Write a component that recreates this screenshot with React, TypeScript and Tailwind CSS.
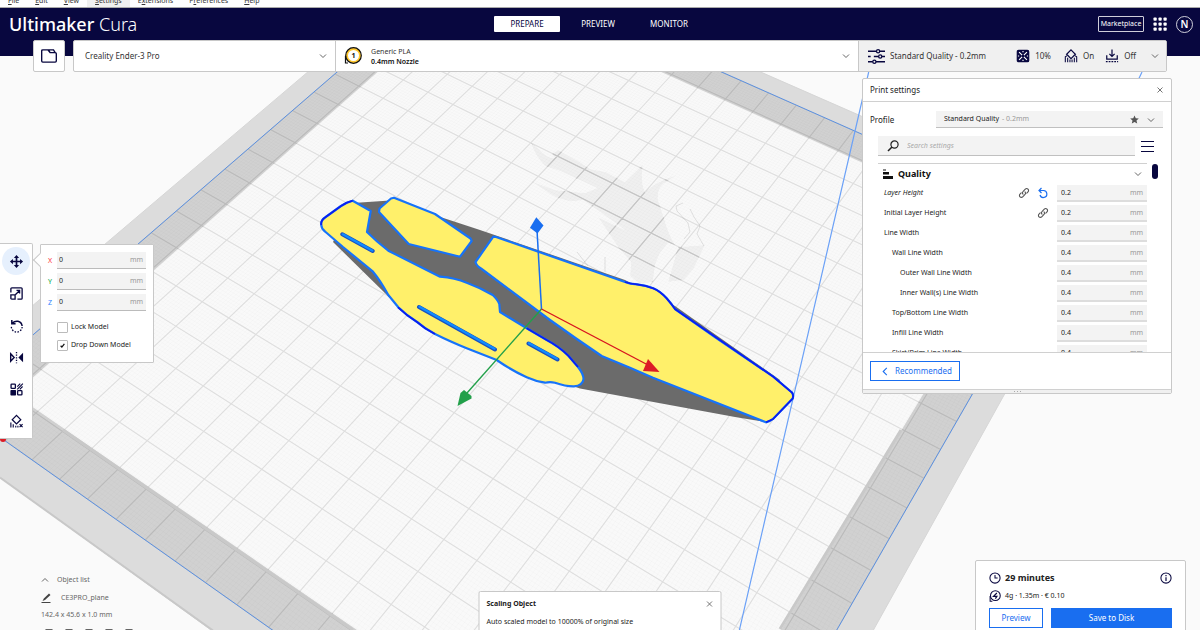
import type { ReactNode } from "react";

const NAVY = "#08073f";

const menuItems = [
  { key: "F", rest: "ile" },
  { key: "E", rest: "dit" },
  { key: "V", rest: "iew" },
  { key: "S", rest: "ettings", active: true },
  { key: "E", rest: "xtensions", second: true },
  { key: "P", rest: "references", second: true },
  { key: "H", rest: "elp" },
];

const settings = [
  { id: "layer-height", name: "Layer Height", value: "0.2", pad: "", link: true, reset: true },
  { id: "initial-layer", name: "Initial Layer Height", value: "0.2", pad: "", link: true },
  { id: "line-width", name: "Line Width", value: "0.4", pad: "" },
  { id: "wall-line", name: "Wall Line Width", value: "0.4", pad: "pl-2" },
  { id: "outer-wall", name: "Outer Wall Line Width", value: "0.4", pad: "pl-4" },
  { id: "inner-wall", name: "Inner Wall(s) Line Width", value: "0.4", pad: "pl-4" },
  { id: "top-bottom", name: "Top/Bottom Line Width", value: "0.4", pad: "pl-2" },
  { id: "infill-line", name: "Infill Line Width", value: "0.4", pad: "pl-2" },
  { id: "skirt-line", name: "Skirt/Brim Line Width", value: "0.4", pad: "pl-2" },
];

const axes = [
  { name: "X", color: "text-red-500" },
  { name: "Y", color: "text-green-600" },
  { name: "Z", color: "text-blue-500" },
];

// build plate coordinates (0..22 cm on both sides) to screen coordinates
const project = (cx: number, cy: number) => {
  const u = cx / 22;
  const v = cy / 22;
  const w = 1 - 0.2207 * u + 0.3429 * v;
  const x = (571.9 * u + 674.7 * v - 47) / w;
  const y = (308.3 * u - 458.7 * v + 404) / w;
  return `${x.toFixed(1)} ${y.toFixed(1)}`;
};

const quad = (u0: number, v0: number, u1: number, v1: number) =>
  `M${project(u0, v0)}L${project(u1, v0)}L${project(u1, v1)}L${project(u0, v1)}Z`;

const gridLines = (step: number) => {
  let d = "";
  for (let i = 0; i <= 22 / step; i++) {
    const p = i * step;
    d += `M${project(p, 0)}L${project(p, 22)}M${project(0, p)}L${project(22, p)}`;
  }
  return d;
};

const minorGrid = gridLines(0.1);
const majorGrid = gridLines(1);
const bed = quad(0, 0, 22, 22);
const inner = quad(1.08, 1.08, 20.92, 20.92);
const outer = quad(-0.78, -0.78, 22.71, 22.7);

const FUSELAGE =
  "M352.7 200.7Q347 202 341 206L325 217.500Q320.500 220.500 321.300 225Q321.500 229 325 231.500L343 247L373 271.700Q380 280 388.300 295L398.300 307.300Q406 315 416.700 321.700Q425 329 435 334Q449 341 466.700 348.300L496.700 360Q511 370 526.700 377.300Q536 381.500 545 382.700Q550 381.500 555 382.700Q566 386.500 574 386.300Q583 385.500 583.500 379Q583.500 374 578 367L568.300 355.700Q559 346.500 546.700 340L526.700 328.300L500 312L499.300 304Q498 300 492.700 295Q481 288 466.700 282.700Q455 278 440 276.700L388.300 250.700Q377 242 367 232L370.700 211Z";
const TAIL = "M394 197.700L391 198.500L379.500 208.500L379 212L408.700 244L460 256.700L471.700 241L470.500 238.500L435 214Z";
const WING =
  "M493.300 236.700L475.500 262Q476.500 266 481 268.500L550 320Q575 338 601.700 356L630 367.700L653 377.700L766 422.300Q770 421.500 773 419L792.700 398.500Q793.800 395 792 392.500L773.300 376.700L716.700 338.300L675 309Q672 304.500 666.700 298.300Q660 291 653.300 288.300Q646 285.300 637 284.300Q630 284 625 282L610 276.700L496 237Z";
const LOGO =
  "M531 143L538 148Q546 158 555 158L552 154L558 150L580 162L590 169L606 172L625 182L633 174L643 164Q640 180 645 193Q652 183 677 175L663 184Q657 190 658 200L664 218Q668 233 675 245L668 243L660 253L655 265L653 282L640 284L630 276L631 262L618 247L608 232L598 217L625 230L600 212L583 200Q566 204 550 194L531 181L555 190L585 193L597 188L575 178L560 171L545 166Q535 156 531 143ZM678 247L705 245L694 268L684 280L668 282Z";

const Chevron = ({ className = "size-2", up = false }: { className?: string; up?: boolean }) => (
  <svg viewBox="0 0 8 8" className={`${className} shrink-0`} fill="none" stroke="#555" strokeWidth="0.9" aria-hidden="true">
    <path d={up ? "M1 5.500L4 2.500L7 5.500" : "M1 2.500L4 5.500L7 2.500"} />
  </svg>
);

const CloseIcon = () => (
  <svg viewBox="0 0 8 8" className="size-2" fill="none" stroke="#666" strokeWidth="0.9" aria-hidden="true">
    <path d="M1.500 1.500L6.500 6.500M6.500 1.500L1.500 6.500" />
  </svg>
);

const Icon = ({ children, className = "size-4" }: { children: ReactNode; className?: string }) => (
  <svg viewBox="0 0 16 16" className={`${className} shrink-0`} fill="none" stroke={NAVY} strokeWidth="1.4" aria-hidden="true">
    {children}
  </svg>
);

const LinkIcon = () => (
  <svg viewBox="0 0 12 12" className="size-3" fill="none" stroke="#555" strokeWidth="1.1" strokeLinecap="round" aria-hidden="true">
    <path d="M5 7.200a2 2 0 0 1 .2-2.900L7.300 2.200a1.900 1.900 0 0 1 2.700 2.700L8.800 6.100" />
    <path d="M7 4.800a2 2 0 0 1-.2 2.900L4.700 9.800A1.900 1.900 0 0 1 2 7.100L3.200 5.900" />
  </svg>
);

const ResetIcon = () => (
  <svg viewBox="0 0 12 12" className="size-3" fill="none" stroke="#196ef0" strokeWidth="1.2" aria-hidden="true">
    <path d="M4.500 1L2 3.500L4.500 6M2 3.500H6.500A3.500 3.500 0 1 1 3 8" />
  </svg>
);

const tools = [
  {
    name: "Move",
    active: true,
    icon: (
      <>
        <path d="M8 3V13M3 8H13" strokeWidth="1.800" />
        <path d="M8 1L10.800 4.200H5.200ZM8 15L10.800 11.800H5.200ZM1 8L4.200 5.200V10.800ZM15 8L11.800 5.200V10.800Z" fill={NAVY} stroke="none" />
      </>
    ),
  },
  {
    name: "Scale",
    icon: (
      <>
        <path d="M2 7V3Q2 2 3 2H13Q14 2 14 3V13Q14 14 13 14H9" />
        <path d="M2 9.500H6.500V14H3Q2 14 2 13ZM7 9L11 5M8 4.700H11.300V8" />
      </>
    ),
  },
  {
    name: "Rotate",
    icon: (
      <>
        <path d="M3 2V6H7M3.300 5.700Q6 3 9.500 3.500Q13.500 4.500 14 8.500" strokeWidth="1.600" />
        <path d="M14 9.500A5.700 5.700 0 0 1 2.500 9" strokeDasharray="1.6 1.500" />
      </>
    ),
  },
  {
    name: "Mirror",
    icon: (
      <>
        <path d="M8 2V14" strokeDasharray="1.4 1.400" />
        <path d="M1.800 4L5.500 8L1.800 12Z" strokeWidth="1.500" />
        <path d="M15 3V13L10 8Z" fill={NAVY} stroke="none" />
      </>
    ),
  },
  {
    name: "Per Model Settings",
    icon: (
      <>
        <rect x="2.200" y="2.200" width="4.600" height="4.600" rx="0.800" />
        <rect x="9.200" y="9.200" width="4.600" height="4.600" rx="0.800" />
        <rect x="1.500" y="8.500" width="6" height="6" rx="0.800" fill={NAVY} stroke="none" />
        <path d="M8.800 5L12 1.800M8.800 7.800L14.800 1.800M11.500 7.800L14.500 4.800" strokeWidth="1.200" />
      </>
    ),
  },
  {
    name: "Support Blocker",
    icon: (
      <>
        <path d="M8 1.500L12.500 6L8 10.500L3.500 6Z" />
        <path d="M2 9V14.500M4.500 11V14.500M7.200 12.500V14.500M9.500 12.500V14.500M11.300 10.800L14.500 14M14.500 10.800L11.300 14" strokeWidth="1.200" />
      </>
    ),
  },
];

const Scene = () => (
  <svg
    className="absolute inset-0 size-full"
    viewBox="0 0 1200 630"
    preserveAspectRatio="xMidYMid slice"
    role="img"
    aria-label="Build plate with CE3PRO_plane"
  >
    <defs>
      <clipPath id="logo">
        <path d={LOGO} />
      </clipPath>
    </defs>
    <path d={outer} fill="#dcdcdc" stroke="#d6d6d6" />
    <path d="M0 477.500L213 630.500" stroke="#c8c8c8" strokeWidth="2" />
    <path d={bed} fill="#f9f9f9" />
    <path d={minorGrid} stroke="#000" strokeOpacity="0.03" strokeWidth="0.6" fill="none" />
    <path d={majorGrid} stroke="#dedede" strokeWidth="1.1" fill="none" />
    <path d={bed + inner} fill="#000" fillOpacity="0.16" fillRule="evenodd" />
    <path d="M63 430L353 630M901 430L780 629" stroke="#c9c9c9" strokeWidth="3" />
    <g clipPath="url(#logo)">
      <path d={LOGO} fill="#000" fillOpacity="0.035" />
      <path d={majorGrid} stroke="#c4c4c4" strokeWidth="1.1" fill="none" />
    </g>
    <path
      d="M683 203L676 206L677 211L688 223L690 232L684 239M690 209L694 217L700 226L697 234L704 246M577 252L588 266M605 257V272"
      stroke="#000"
      strokeOpacity="0.1"
      fill="none"
    />
    <path d={bed} fill="none" stroke="#5b90e0" strokeWidth="1" />
    <path d="M868.700 72L673.600 914M1142 72L1069 226" stroke="#6ba1f7" strokeWidth="1.200" />

    <path
      d="M353 203L390 200.500L480 230L625 280L675 306L716 335L780 380L766 422L735 417L580 388.500L500 362L390 298L333 242Z"
      fill="#6b6b6b"
    />
    <g fill="#fff06a" stroke="#1673fa" strokeWidth="2.200" strokeLinejoin="round">
      <path d={FUSELAGE} />
      <path d={TAIL} />
      <path d={WING} />
    </g>
    <path
      d="M625 282Q630 284 637 284.300Q646 285.300 653.300 288.300Q660 291 666.700 298.300Q672 304.500 675 309L773.300 376.700L792 392.500Q793.800 395 792.700 398.500L773 419L766 422.300M352.700 200.700Q347 202 341 206L325 217.500Q320.500 220.500 321.300 225M398 307.300Q406 315 416.700 321.700Q425 329 435 334M526.700 328.300L546.700 340Q559 346.500 568.300 355.700L578 367"
      fill="none"
      stroke="#0a1ef0"
      strokeWidth="1.800"
    />
    <g strokeLinecap="round">
      <path d="M342.300 234.300L372.700 251M419 307L495 349.500M528.500 343.500L557.500 359.500" stroke="#1b50c0" strokeWidth="4" />
      <path d="M342.800 234.300L372.300 250.500M419.500 306.700L494.500 348.700M529 343.200L557 358.700" stroke="#0f8cff" strokeWidth="2.200" />
    </g>

    <path d="M541.500 309L537 230" stroke="#196ef0" strokeWidth="1.500" />
    <path d="M536.300 217.300L543.500 225.500L537.500 233.500L530 227.700Z" fill="#196ef0" />
    <path d="M541.500 309L467 393" stroke="#22a04a" strokeWidth="1.400" />
    <path d="M464 390L471.500 396V398.500L457.500 406L460.500 393Z" fill="#22a04a" />
    <path d="M541.500 309L648 365" stroke="#d8141f" strokeWidth="1.400" />
    <path d="M648 359L659.500 372L643 371Z" fill="#dc1c26" />
    <circle cx="3" cy="439" r="3" fill="#dc1c26" />
  </svg>
);

const Header = () => (
  <header className="relative grid h-8 grid-cols-[1fr_auto_1fr] items-center bg-[#08073f] pr-[7px] pl-[9px] text-white">
    <h1 className="text-[18px] leading-6 font-medium">
      Ultimaker <span className="font-light">Cura</span>
    </h1>
    <nav className="flex gap-[5px] pr-[6px] text-[8px] leading-4">
      <button className="w-[66px] rounded-[1px] bg-white text-[#08073f]">PREPARE</button>
      <button className="w-[66px]">PREVIEW</button>
      <button className="w-[66px]">MONITOR</button>
    </nav>
    <div className="flex items-center justify-end gap-[9px]">
      <button className="w-[46px] rounded-[1px] border border-white/80 text-[7px] leading-[14px]">Marketplace</button>
      <button aria-label="Applications">
        <svg viewBox="0 0 14 14" className="size-[14px]" fill="#fff">
          {[0.500, 5.500, 10.500].map((y) =>
            [0.500, 5.500, 10.500].map((x) => <rect key={`${x}-${y}`} x={x} y={y} width="3.200" height="3.200" rx="0.800" />)
          )}
        </svg>
      </button>
      <button className="size-[17px] rounded-full border border-white/80 text-[10px] leading-[15px] font-semibold">N</button>
    </div>
  </header>
);

const StageBar = () => (
  <div className="relative flex h-8 gap-2 bg-[linear-gradient(#08073f_50%,transparent_50%)] px-[33px] text-[8px] text-[#333]">
    <button aria-label="Open file" className="flex w-8 items-center justify-center rounded-[2px] border border-[#c8c8c8] bg-white">
      <Icon className="size-[18px]">
        <path d="M1.500 3.500V12.500Q1.500 13.500 2.500 13.500H13.500Q14.500 13.500 14.500 12.500V6Q14.500 5 13.500 5H9L7 2.500H2.500Q1.500 2.500 1.500 3.500ZM9 5L7.500 2.500H12L13.500 5" strokeWidth="1.200" />
      </Icon>
    </button>
    <div className="flex flex-1 rounded-[2px] border border-[#c8c8c8] bg-white">
      <div className="relative flex w-[24%] items-center border-r border-[#c8c8c8]">
        <select aria-label="Printer" className="size-full appearance-none pr-6 pl-[11px] outline-none">
          <option>Creality Ender-3 Pro</option>
        </select>
        <span className="pointer-events-none absolute right-2">
          <Chevron />
        </span>
      </div>
      <button className="flex flex-1 items-center gap-[9px] px-2 text-left">
        <svg viewBox="0 0 18 18" className="size-[18px]" aria-hidden="true">
          <circle cx="9.500" cy="8.500" r="6.600" fill="#fff" stroke="#ffc72c" strokeWidth="2.200" />
          <circle cx="9.500" cy="8.500" r="7.800" fill="none" stroke="#111" strokeWidth="1.200" />
          <path d="M1.500 9V16H4" fill="none" stroke="#111" strokeWidth="1.200" />
          <text x="9.500" y="11" textAnchor="middle" fontSize="7" fontWeight="700" fill="#111">1</text>
        </svg>
        <span className="flex-1 pt-[2px] text-[7px] leading-[10px]">
          Generic PLA
          <br />
          <b className="font-semibold text-[#111]">0.4mm Nozzle</b>
        </span>
        <Chevron />
      </button>
      <button className="flex w-[308px] items-center gap-[5px] border-l border-[#c8c8c8] bg-[#f0f0f0] pr-[7px] pl-[9px] text-left">
        <Icon className="size-[17px]">
          <path d="M0 3H8M11 3H16M0 8H2.500M5.500 8H10M13 8H16M0 13H4.500M7.500 13H16" />
          <circle cx="9.500" cy="3" r="1.500" strokeWidth="1.200" />
          <circle cx="11.500" cy="8" r="1.500" strokeWidth="1.200" />
          <circle cx="6" cy="13" r="1.500" strokeWidth="1.200" />
        </Icon>
        <span className="flex-1">Standard Quality - 0.2mm</span>
        <span className="flex items-center gap-[5px]">
          <Icon className="size-[14px]">
            <rect x="1.500" y="1.500" width="13" height="13" rx="1.500" fill={NAVY} />
            <path d="M3.500 3.500L12.500 12.500M12.500 3.500L3.500 12.500" stroke="#fff" strokeWidth="1.300" />
            <path d="M8 2.200V3.600M8 12.400V13.800M2.200 8H3.600M12.400 8H13.800" stroke="#fff" strokeWidth="1.300" />
            <circle cx="8" cy="8" r="1.400" fill={NAVY} stroke="none" />
          </Icon>
          10%
        </span>
        <span className="ml-2 flex items-center gap-[5px]">
          <Icon className="size-[14px]">
            <path d="M8 1L13 6L8 11L3 6Z" />
            <path d="M1.500 15V9L3.500 7.500M14.500 15V9L12.500 7.500M4.200 10V15M6.800 12V15M9.200 12V15M11.800 10V15" strokeWidth="1.200" />
          </Icon>
          On
        </span>
        <span className="ml-[6px] flex items-center gap-[5px]">
          <Icon className="size-[14px]">
            <path d="M8 0.500V8M5 5.500L8 8.500L11 5.500M2 7V11.500H14V7" />
            <path d="M1 14.500H15" strokeDasharray="2 1.200" />
          </Icon>
          Off
        </span>
        <span className="ml-[10px]">
          <Chevron />
        </span>
      </button>
    </div>
  </div>
);

const Toolbox = () => (
  <div className="absolute top-[171px] left-0 flex items-start gap-[7px]">
    <div className="flex flex-col gap-1 rounded-r-[2px] border border-l-0 border-[#c8c8c8] bg-white px-[2px] py-[3px]">
      {tools.map((tool) => (
        <button
          key={tool.name}
          aria-label={tool.name}
          className={`flex size-7 items-center justify-center rounded-full ${tool.active ? "bg-[#e6f0fd]" : ""}`}
        >
          <Icon className="size-[15px]">{tool.icon}</Icon>
        </button>
      ))}
    </div>
    <div className="relative mt-px w-[114px] rounded-[1px] border border-[#c8c8c8] bg-white px-[7px] pt-[7px] pb-[9px] text-[7px] leading-4 text-[#222]">
      <span className="absolute top-[10px] -left-[6px] size-[10px] rotate-45 border-b border-l border-[#c8c8c8] bg-white" />
      <div className="flex flex-col gap-1">
        {axes.map((axis) => (
          <label key={axis.name} className="flex items-center gap-[3px]">
            <span className={`w-[6px] ${axis.color}`}>{axis.name}</span>
            <span className="flex h-[17px] flex-1 items-center border-b border-[#bbb] bg-[#f3f3f3] pr-[3px] pl-[2px]">
              <input defaultValue="0" className="w-0 flex-1 bg-transparent outline-none" />
              <span className="text-[#999]">mm</span>
            </span>
          </label>
        ))}
      </div>
      <div className="mt-2 flex flex-col gap-[2px] pl-[9px]">
        {["Lock Model", "Drop Down Model"].map((name, i) => (
          <label key={name} className="flex items-center gap-[3px]">
            <span className="relative flex size-[11px] items-center justify-center">
              <input type="checkbox" defaultChecked={i === 1} className="peer size-[11px] appearance-none rounded-[1px] border border-[#bbb] bg-white" />
              <svg viewBox="0 0 8 8" className="pointer-events-none absolute hidden size-[5px] peer-checked:block" fill="none" stroke="#111" strokeWidth="2" aria-hidden="true">
                <path d="M1 4.500L3 6.500L7 1.500" />
              </svg>
            </span>
            {name}
          </label>
        ))}
      </div>
    </div>
  </div>
);

const PrintSettings = () => (
  <section className="absolute top-[6px] right-7 flex w-[310px] flex-col rounded-[2px] border border-[#c8c8c8] bg-white text-[8px] text-[#222]">
    <div className="flex h-[23px] items-center justify-between border-b border-[#d0d0d0] px-[7px]">
      <h2>Print settings</h2>
      <button aria-label="Close print settings">
        <CloseIcon />
      </button>
    </div>
    <div className="mt-[9px] flex items-center pr-2 pl-[7px]">
      <label htmlFor="profile" className="w-[66px]">Profile</label>
      <div className="flex h-[17px] flex-1 items-center border-b border-[#c0c0c0] bg-[#f3f3f3] px-2 pt-px text-[7px]">
        <select id="profile" className="appearance-none bg-transparent outline-none">
          <option>Standard Quality</option>
        </select>
        <span className="flex-1 pl-[2px] text-[#999]">- 0.2mm</span>
        <svg viewBox="0 0 10 10" className="mr-2 size-[9px]" fill="#555" aria-hidden="true">
          <path d="M5 0.500L6.400 3.600L9.800 3.900L7.200 6.200L8 9.500L5 7.700L2 9.500L2.800 6.200L0.200 3.900L3.600 3.600Z" />
        </svg>
        <Chevron />
      </div>
    </div>
    <div className="mt-2 flex items-center gap-[6px] pr-[17px] pl-[15px]">
      <label className="flex h-5 flex-1 items-center gap-2 border-b border-[#c0c0c0] bg-[#f3f3f3] pl-[9px]">
        <svg viewBox="0 0 12 12" className="size-3" fill="none" stroke="#222" strokeWidth="1.200" aria-hidden="true">
          <circle cx="7.500" cy="4.500" r="3.600" />
          <path d="M5 7L1 11" strokeWidth="1.600" />
        </svg>
        <input aria-label="Search settings" placeholder="Search settings" className="flex-1 bg-transparent pt-[2px] text-[7px] italic outline-none placeholder:text-[#aaa]" />
      </label>
      <button aria-label="Setting visibility" className="flex w-[13px] flex-col gap-1">
        <span className="h-px w-full bg-[#08073f]" />
        <span className="h-px w-full bg-[#08073f]" />
        <span className="h-px w-full bg-[#08073f]" />
      </button>
    </div>
    <div className="mt-[7px] flex h-[190px] gap-[5px] overflow-hidden border-b border-[#d0d0d0] pr-[13px] pl-[15px]">
      <div className="flex-1 border-t border-[#d0d0d0]">
        <button className="flex h-[19px] w-full items-center gap-[5px] px-[5px] text-left text-[9px] font-bold text-[#111]">
          <svg viewBox="0 0 10 10" className="size-[10px]" fill="#111" aria-hidden="true">
            <path d="M0 0.500H3V1.500H0ZM0 3H6V5.500H0ZM0 7H10V10H0Z" />
          </svg>
          <span className="flex-1">Quality</span>
          <Chevron />
        </button>
        {settings.map((setting) => (
          <div key={setting.id} className="flex h-5 items-center text-[7px]">
            <label htmlFor={setting.id} className={`flex-1 pl-[6px] ${setting.reset ? "italic" : ""}`}>
              <span className={setting.pad}>{setting.name}</span>
            </label>
            <span className="mr-2 flex gap-[7px]">
              {setting.link && (
                <button aria-label={`${setting.name} is linked`}>
                  <LinkIcon />
                </button>
              )}
              {setting.reset && (
                <button aria-label={`Reset ${setting.name}`}>
                  <ResetIcon />
                </button>
              )}
            </span>
            <span className="flex h-[17px] w-[90px] items-center border-b-2 border-[#ddd] bg-[#f3f3f3] px-1 pt-[2px]">
              <input id={setting.id} defaultValue={setting.value} className="w-0 flex-1 bg-transparent outline-none" />
              <span className="text-[#999]">mm</span>
            </span>
          </div>
        ))}
      </div>
      <span className="mt-px h-[15px] w-[6px] rounded-full bg-[#08073f]" />
    </div>
    <div className="px-[7px] py-2">
      <button className="flex h-5 w-[90px] items-center gap-[7px] border border-[#196ef0] pl-[11px] text-[#196ef0]">
        <svg viewBox="0 0 6 10" className="h-[9px] w-[6px]" fill="none" stroke="#196ef0" strokeWidth="1.200" aria-hidden="true">
          <path d="M5 1L1 5L5 9" />
        </svg>
        Recommended
      </button>
    </div>
    <div className="flex h-1 items-center justify-center gap-[2px] border-t border-[#d0d0d0] bg-[#f0f0f0]">
      <i className="size-px bg-[#aaa]" />
      <i className="size-px bg-[#aaa]" />
      <i className="size-px bg-[#aaa]" />
    </div>
  </section>
);

const ObjectList = () => (
  <div className="absolute -bottom-[5px] left-[41px] flex flex-col text-[7px] leading-[18px] text-[#666]">
    <button className="flex items-center gap-2 text-left">
      <Chevron up />
      Object list
    </button>
    <div className="flex items-center gap-[10px]">
      <svg viewBox="0 0 10 10" className="size-[10px]" fill="#444" aria-hidden="true">
        <path d="M8 0.500L9.500 2L4 7L1.500 8L2.800 5.500ZM0.500 9H9.500V10H0.500Z" />
      </svg>
      CE3PRO_plane
    </div>
    <p className="leading-[15px]">142.4 x 45.6 x 1.0 mm</p>
    <div className="mt-[7px] flex items-center gap-3 pl-1">
      {[0, 1, 2, 3, 4].map((n) => (
        <button key={n} aria-label={`View ${n + 1}`} className="h-[6px] w-2 rounded-t-[1px] border border-[#666]" />
      ))}
    </div>
  </div>
);

const Message = () => (
  <div className="absolute -bottom-2 left-1/2 w-[243px] -translate-x-1/2 rounded-t-[2px] border border-[#c8c8c8] bg-white px-[7px] pt-[5px] pb-[9px] text-[7px] text-[#222]">
    <div className="flex items-center justify-between leading-[14px]">
      <b className="font-bold">Scaling Object</b>
      <button aria-label="Dismiss">
        <CloseIcon />
      </button>
    </div>
    <p className="mt-[5px] leading-3">Auto scaled model to 10000% of original size</p>
  </div>
);

const JobCard = () => (
  <section className="absolute right-[14px] -bottom-3 w-[211px] rounded-[2px] border border-[#c8c8c8] bg-white px-[13px] pt-[9px] pb-[13px] text-[#222]">
    <div className="flex items-center gap-1 text-[9px] leading-4">
      <Icon className="size-3">
        <circle cx="8" cy="8" r="6.800" />
        <path d="M8 4V8H11.500" />
      </Icon>
      <b className="flex-1 font-bold">29 minutes</b>
      <button aria-label="Print details">
        <Icon className="size-3">
          <circle cx="8" cy="8" r="6.800" />
          <path d="M8 7V12M8 4V5.500" strokeWidth="1.600" />
        </Icon>
      </button>
    </div>
    <div className="mt-[2px] flex items-center gap-1 text-[7px] leading-4">
      <Icon className="size-3">
        <circle cx="8.500" cy="7.500" r="6.500" />
        <path d="M1.500 8V15H4.500" />
        <path d="M10.500 4L6 8.500H10.500L8.500 11.500" strokeWidth="1.600" />
      </Icon>
      4g · 1.35m · € 0.10
    </div>
    <div className="mt-1 flex gap-2 text-[8px] leading-[18px]">
      <button className="w-[54px] border border-[#196ef0] text-[#196ef0]">Preview</button>
      <button className="flex-1 border border-[#196ef0] bg-[#196ef0] text-white">Save to Disk</button>
    </div>
  </section>
);

const App = () => {
  return (
    <div className="relative flex h-screen flex-col overflow-hidden bg-[#fafafa] font-['Noto_Sans','Open_Sans',sans-serif]">
      <Scene />
      <nav className="relative flex h-2 items-end overflow-hidden border-b border-[#aaa] bg-white text-[7px] leading-3 text-[#333]">
        {menuItems.map((item) => (
          <a key={item.rest} href="#" className={`px-2 ${item.active ? "bg-[#f0f0f0]" : ""}`}>
            {item.second ? (
              <>
                {item.key}
                <u>{item.rest[0]}</u>
                {item.rest.slice(1)}
              </>
            ) : (
              <>
                <u>{item.key}</u>
                {item.rest}
              </>
            )}
          </a>
        ))}
      </nav>
      <Header />
      <StageBar />
      <main className="relative flex-1">
        <Toolbox />
        <PrintSettings />
        <ObjectList />
        <Message />
        <JobCard />
      </main>
    </div>
  );
};

export default App;
